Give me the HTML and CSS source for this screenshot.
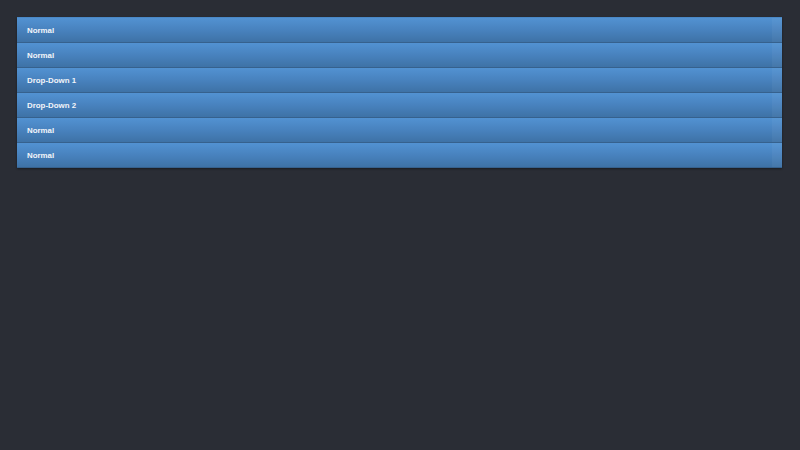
FILE: index.html
```html
<!DOCTYPE html>
<html>
<head>
<meta charset="utf-8">
<link rel="stylesheet" href="styles.css">
</head>
<body>
<ul class="menu">
  <li class="item">Normal</li>
  <li class="item">Normal</li>
  <li class="item">Drop-Down 1</li>
  <li class="item">Drop-Down 2</li>
  <li class="item">Normal</li>
  <li class="item">Normal</li>
</ul>
</body>
</html>
```
FILE: styles.css
```css
html, body {
  margin: 0;
  padding: 0;
  background: #2a2d35;
  height: 100%;
}
body {
  padding: 17px 18px 0 17px;
  box-sizing: border-box;
  font-family: "Liberation Sans", Arial, sans-serif;
}
.menu {
  list-style: none;
  margin: 0;
  padding: 0;
  display: flex;
  flex-direction: column;
  border-bottom: 1px solid #36618d;
  box-shadow: 0 1px 2px rgba(0,0,0,0.4);
}
.item {
  height: 25px;
  box-sizing: border-box;
  display: flex;
  align-items: center;
  padding-left: 10px;
  color: #f2f5f9;
  font-size: 7.9px;
  font-weight: bold;
  background: linear-gradient(to bottom, #5292d2 0%, #4882be 50%, #3e72a6 100%);
  border-top: 1px solid #36618d;
  box-shadow: inset -12px 0 0 -2px rgba(255,255,255,0.04);
}
.item:first-child {
  border-top-color: #4a88c6;
}
```
